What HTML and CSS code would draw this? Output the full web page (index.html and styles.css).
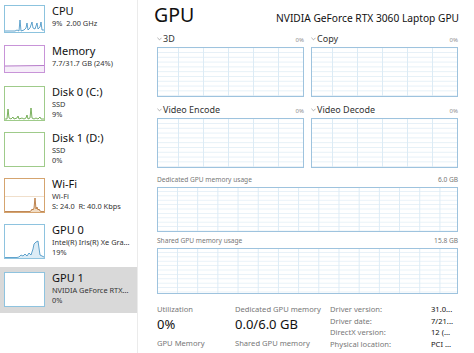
FILE: index.html
```html
<!DOCTYPE html>
<html lang="en">
<head>
    <meta charset="UTF-8">
    <meta name="viewport" content="width=device-width, initial-scale=1.0">
    <title>Task Manager - GPU</title>
    <link rel="stylesheet" href="styles.css">
</head>
<body>
<div class="window">
    <nav class="sidebar">
        <div class="item item-short">
            <div class="thumb thumb-cpu">
                <svg viewBox="0 0 39 26" preserveAspectRatio="none">
                    <polyline points="0,25 10,25 12,24 14,25 15,14 16,25 19,24 21,22 22,17 23,24 25,22 26,19 27,16 28,22 30,23 32,17 33,23 35,21 36,16 37,24 39,24" />
                </svg>
            </div>
            <div class="item-text">
                <div class="item-title">CPU</div>
                <div class="item-sub">9%&nbsp; 2.00 GHz</div>
            </div>
        </div>
        <div class="item item-short item-mem">
            <div class="thumb thumb-mem">
                <svg viewBox="0 0 39 26" preserveAspectRatio="none">
                    <polygon class="fill" points="0,20 39,19.5 39,26 0,26" />
                    <polyline points="0,20 39,19.5" />
                </svg>
            </div>
            <div class="item-text">
                <div class="item-title">Memory</div>
                <div class="item-sub">7.7/31.7 GB (24%)</div>
            </div>
        </div>
        <div class="item">
            <div class="thumb thumb-disk">
                <svg viewBox="0 0 39 33" preserveAspectRatio="none">
                    <polyline points="0,32 2,32 3,22 4,31 6,32 8,30 9,32 12,31 13,29 14,32 17,31 19,32 21,31 22,28 23,32 25,31 26,21 27,31 29,32 31,31 33,32 35,30 36,32 39,32" />
                </svg>
            </div>
            <div class="item-text">
                <div class="item-title">Disk 0 (C:)</div>
                <div class="item-sub">SSD</div>
                <div class="item-sub">9%</div>
            </div>
        </div>
        <div class="item">
            <div class="thumb thumb-disk"></div>
            <div class="item-text">
                <div class="item-title">Disk 1 (D:)</div>
                <div class="item-sub">SSD</div>
                <div class="item-sub">0%</div>
            </div>
        </div>
        <div class="item">
            <div class="thumb thumb-wifi">
                <svg viewBox="0 0 39 33" preserveAspectRatio="none">
                    <line class="grid" x1="0" y1="17.5" x2="39" y2="17.5" />
                    <polygon class="fill" points="26,33 27,30 28,31 29,29 30,19 31,30 32,28 33,31 34,30 35,32 36,33" />
                    <polyline points="0,32.5 25,32.5 26,32 27,30 28,31 29,29 30,19 31,30 32,28 33,31 34,30 35,32 36,32.5 39,32.5" />
                </svg>
            </div>
            <div class="item-text">
                <div class="item-title">Wi-Fi</div>
                <div class="item-sub">Wi-Fi</div>
                <div class="item-sub">S: 24.0&nbsp; R: 40.0 Kbps</div>
            </div>
        </div>
        <div class="item item-gpu0">
            <div class="thumb thumb-gpu">
                <svg viewBox="0 0 39 33" preserveAspectRatio="none">
                    <polygon class="fill" points="14,33 16,30 18,31 20,29 22,31 24,28 26,30 28,24 29,19 31,17 33,16 34,23 35,30 37,31 39,32 39,33" />
                    <polyline points="0,32.5 12,32.5 14,32 16,30 18,31 20,29 22,31 24,28 26,30 28,24 29,19 31,17 33,16 34,23 35,30 37,31 39,32" />
                </svg>
            </div>
            <div class="item-text">
                <div class="item-title">GPU 0</div>
                <div class="item-sub">Intel(R) Iris(R) Xe Gra...</div>
                <div class="item-sub">19%</div>
            </div>
        </div>
        <div class="item selected">
            <div class="thumb thumb-gpu"></div>
            <div class="item-text">
                <div class="item-title">GPU 1</div>
                <div class="item-sub">NVIDIA GeForce RTX...</div>
                <div class="item-sub">0%</div>
            </div>
        </div>
    </nav>

    <main class="detail">
        <div class="detail-head">
            <h1>GPU</h1>
            <span class="adapter">NVIDIA GeForce RTX 3060 Laptop GPU</span>
        </div>

        <div class="engines">
            <div class="engine">
                <div class="engine-label">
                    <span class="engine-name"><svg class="chev" viewBox="0 0 6 4"><polyline points="0.5,0.5 3,3 5.5,0.5" /></svg>3D</span>
                    <span class="pct">0%</span>
                </div>
                <div class="chart chart-engine"></div>
            </div>
            <div class="engine">
                <div class="engine-label">
                    <span class="engine-name"><svg class="chev" viewBox="0 0 6 4"><polyline points="0.5,0.5 3,3 5.5,0.5" /></svg>Copy</span>
                    <span class="pct">0%</span>
                </div>
                <div class="chart chart-engine"></div>
            </div>
            <div class="engine">
                <div class="engine-label">
                    <span class="engine-name"><svg class="chev" viewBox="0 0 6 4"><polyline points="0.5,0.5 3,3 5.5,0.5" /></svg>Video Encode</span>
                    <span class="pct">0%</span>
                </div>
                <div class="chart chart-engine"></div>
            </div>
            <div class="engine">
                <div class="engine-label">
                    <span class="engine-name"><svg class="chev" viewBox="0 0 6 4"><polyline points="0.5,0.5 3,3 5.5,0.5" /></svg>Video Decode</span>
                    <span class="pct">0%</span>
                </div>
                <div class="chart chart-engine"></div>
            </div>
        </div>

        <div class="mem-label">
            <span>Dedicated GPU memory usage</span>
            <span>6.0 GB</span>
        </div>
        <div class="chart chart-mem"></div>

        <div class="mem-label mem-label-shared">
            <span>Shared GPU memory usage</span>
            <span>15.8 GB</span>
        </div>
        <div class="chart chart-mem chart-shared"></div>

        <div class="stats">
            <div class="stat stat-util">
                <div class="stat-label">Utilization</div>
                <div class="stat-value">0%</div>
                <div class="stat-label">GPU Memory</div>
            </div>
            <div class="stat stat-ded">
                <div class="stat-label">Dedicated GPU memory</div>
                <div class="stat-value">0.0/6.0 GB</div>
                <div class="stat-label">Shared GPU memory</div>
            </div>
            <div class="props">
                <span class="prop-name">Driver version:</span><span class="prop-val">31.0...</span>
                <span class="prop-name">Driver date:</span><span class="prop-val">7/21...</span>
                <span class="prop-name">DirectX version:</span><span class="prop-val">12 (...</span>
                <span class="prop-name">Physical location:</span><span class="prop-val">PCI ...</span>
            </div>
        </div>
    </main>
</div>
</body>
</html>
```

FILE: styles.css
```css
body {
    margin: 0;
    padding: 0;
    background: #ffffff;
    font-family: "Segoe UI", "Noto Sans", sans-serif;
    color: #1a1a1a;
}

.window {
    display: flex;
    width: 474px;
    height: 353px;
    overflow: hidden;
}

/* left list */
.sidebar {
    width: 137px;
    flex-shrink: 0;
    border-right: 1px solid #ebebeb;
}

.item {
    display: flex;
    gap: 7px;
    height: 46px;
    box-sizing: border-box;
    padding: 5px 0 0 4px;
}

.item-short {
    height: 40px;
}

.item-mem {
    height: 41px;
}

.item-gpu0 {
    height: 48px;
}

.item.selected {
    background: #d9d9d9;
}

.thumb {
    width: 41px;
    height: 35px;
    box-sizing: border-box;
    border: 1px solid #8ec3df;
    background: #ffffff;
    flex-shrink: 0;
}

.item-short .thumb {
    height: 28px;
}

.thumb svg {
    display: block;
    width: 100%;
    height: 100%;
}

.thumb polyline {
    fill: none;
    stroke-width: 0.8;
}

.thumb-cpu { border-color: #8cc3de; }
.thumb-cpu polyline { stroke: #3a8dc0; }

.thumb-mem { border-color: #c894d8; }
.thumb-mem polyline { stroke: #a45cbc; }
.thumb-mem .fill { fill: #f6eef9; }

.thumb-disk { border-color: #9fcb8a; }
.thumb-disk polyline { stroke: #5a9e37; }

.thumb-wifi { border-color: #d5a46f; }
.thumb-wifi polyline { stroke: #b06a2b; }
.thumb-wifi .fill { fill: #f1dcc4; }
.thumb-wifi .grid { stroke: #e6c9a8; stroke-width: 0.6; }

.thumb-gpu { border-color: #8ec3df; }
.thumb-gpu polyline { stroke: #3a8dc0; }
.thumb-gpu .fill { fill: #dcecf6; }

.item-text {
    min-width: 0;
    white-space: nowrap;
}

.item-title {
    font-size: 11px;
    line-height: 14px;
    margin-top: -1px;
    color: #111111;
}

.item-sub {
    font-size: 7.4px;
    line-height: 10px;
    color: #333333;
}

/* right detail */
.detail {
    flex: 1;
    padding: 0 16px 0 19px;
    min-width: 0;
}

.detail-head {
    display: flex;
    justify-content: space-between;
    align-items: baseline;
    height: 32px;
    margin-left: -3px;
}

.detail-head h1 {
    margin: 0;
    font-size: 19.5px;
    font-weight: normal;
    line-height: 30px;
    color: #111111;
}

.adapter {
    font-size: 10.2px;
    color: #111111;
    margin-right: -1px;
}

.engines {
    display: grid;
    grid-template-columns: 1fr 1fr;
    column-gap: 7px;
    row-gap: 6px;
}

.engine-label {
    display: flex;
    justify-content: space-between;
    align-items: baseline;
    height: 14px;
    line-height: 13px;
    margin-bottom: 1px;
}

.engine-name {
    font-size: 9px;
    color: #333333;
}

.chev {
    width: 5px;
    height: 4px;
    margin: 0 1px 1px 0;
    fill: none;
    stroke: #888888;
    stroke-width: 0.8;
}

.pct {
    font-size: 6px;
    color: #8c8c8c;
}

.chart {
    box-sizing: border-box;
    border: 1px solid #9ec3de;
    background-color: #ffffff;
}

.chart-engine {
    height: 50px;
    background-image:
        linear-gradient(to right, #dcebf5 1px, transparent 1px),
        linear-gradient(to bottom, #e6f0f7 1px, transparent 1px);
    background-size: 25px 100%, 100% 4.8px;
    background-position: 20px 0, 0 4px;
}

.mem-label {
    display: flex;
    justify-content: space-between;
    align-items: baseline;
    height: 12px;
    line-height: 12px;
    margin-top: 6px;
    margin-bottom: 1px;
    font-size: 6.6px;
    color: #777777;
}

.mem-label-shared {
    margin-top: 3px;
}

.chart-mem {
    height: 45px;
    background-image:
        linear-gradient(to right, #dcebf5 1px, transparent 1px),
        linear-gradient(to bottom, #e6f0f7 1px, transparent 1px);
    background-size: 20.2px 100%, 100% 4.4px;
    background-position: 19px 0, 0 3px;
}

.chart-shared {
    height: 46px;
}

.stats {
    display: flex;
    padding-top: 10px;
}

.stat-util {
    width: 78px;
}

.stat-ded {
    width: 95px;
}

.stat-label {
    font-size: 7.6px;
    line-height: 10px;
    color: #777777;
    white-space: nowrap;
}

.stat-value {
    font-size: 13px;
    line-height: 21px;
    margin-bottom: 3px;
    color: #111111;
    white-space: nowrap;
}

.props {
    display: grid;
    grid-template-columns: 101px auto;
    font-size: 7.6px;
    line-height: 11.7px;
    white-space: nowrap;
}

.prop-name {
    color: #777777;
}

.prop-val {
    color: #111111;
}
```
